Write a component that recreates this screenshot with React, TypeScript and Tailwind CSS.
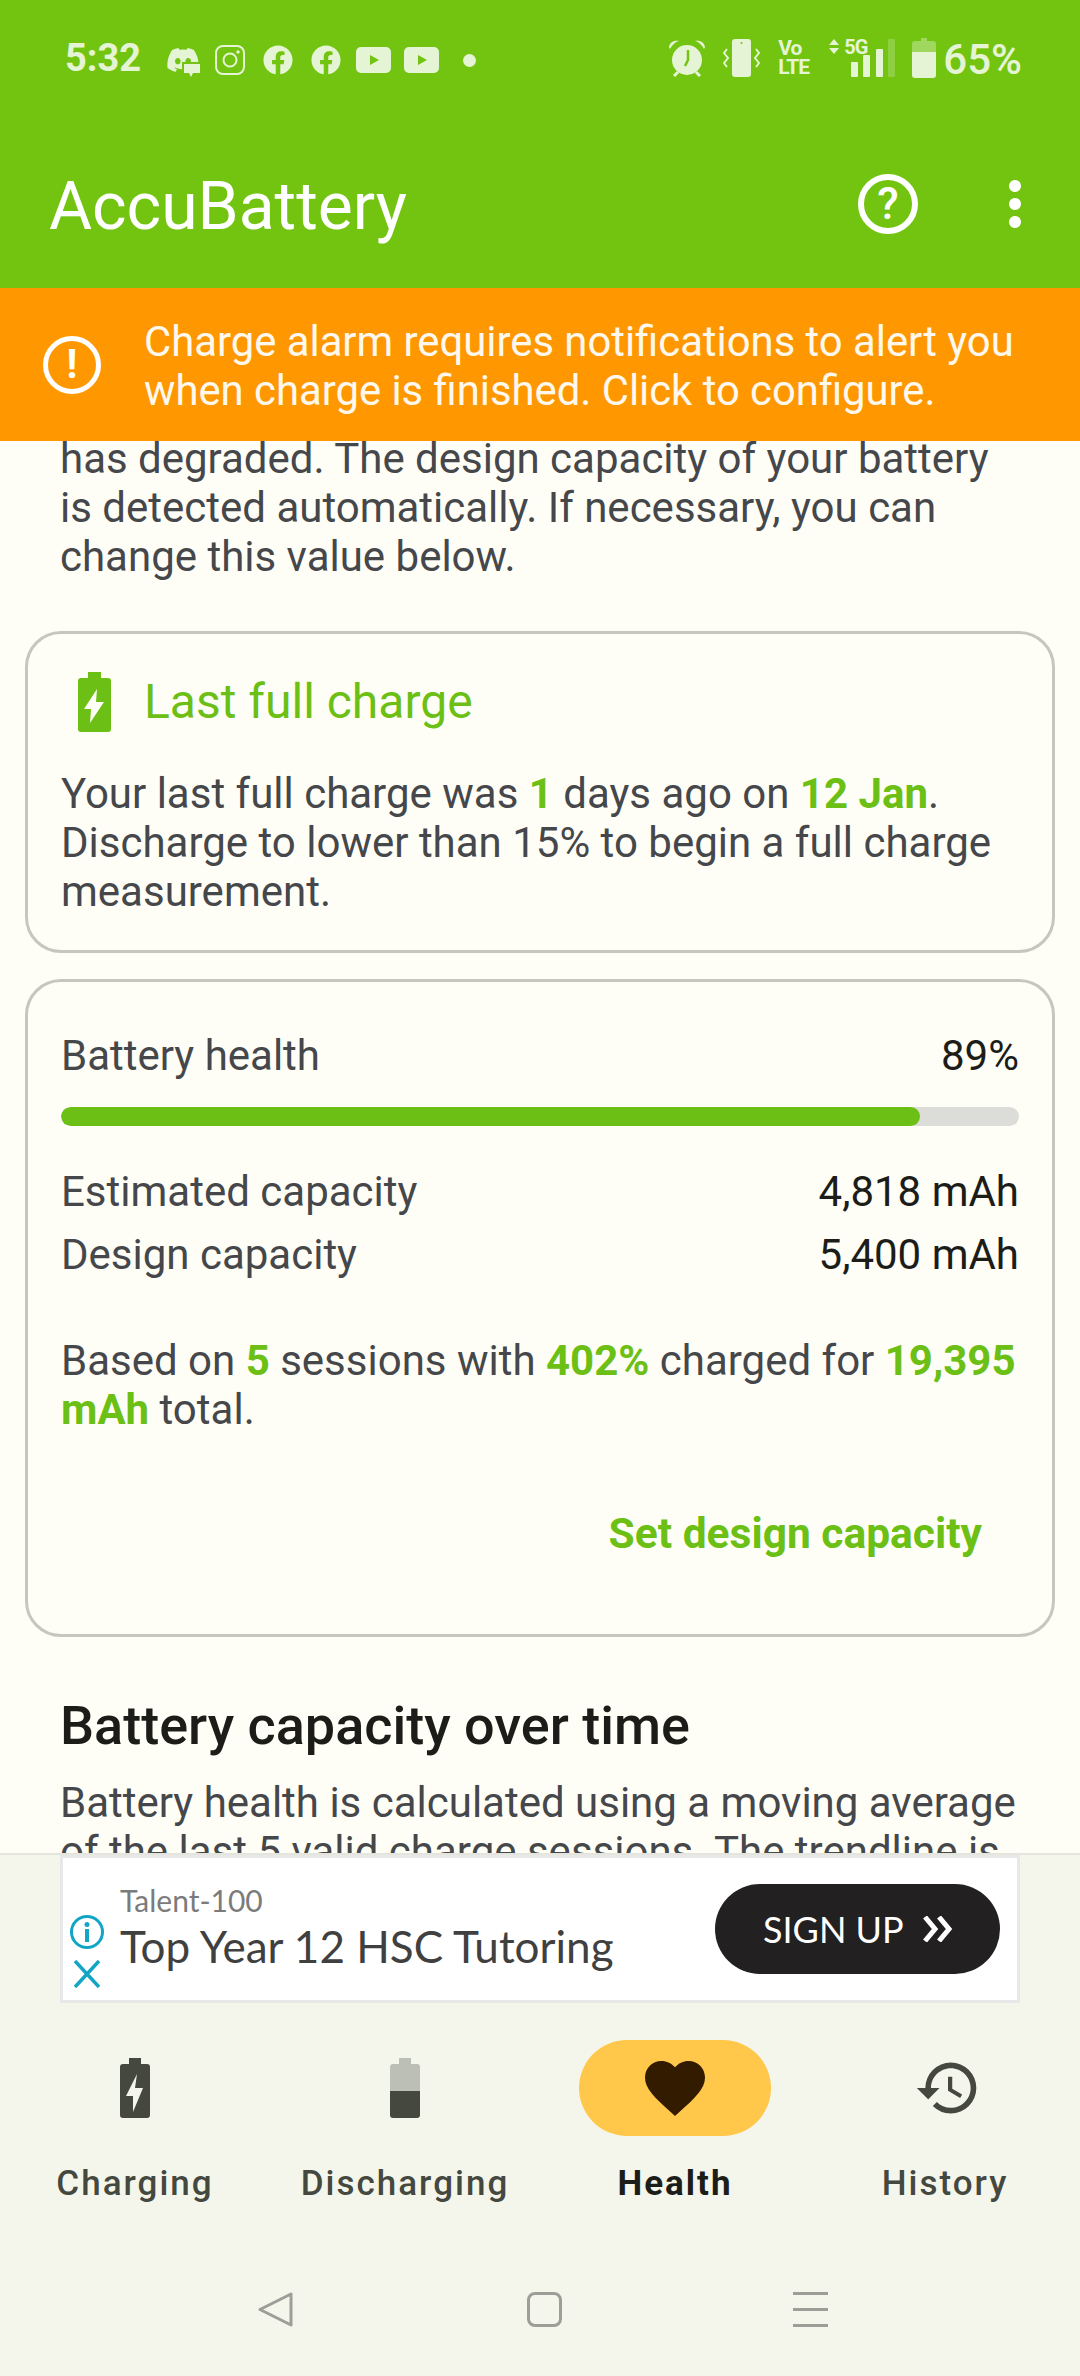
import { MdFavorite, MdHistory, MdMoreVert } from "react-icons/md";
import { FaDiscord, FaFacebook } from "react-icons/fa";

const ROBOTO = "font-['Roboto',sans-serif]";

function Green({ children }: { children: React.ReactNode }) {
  return <span className="font-bold text-[#6cbf14]">{children}</span>;
}

function YoutubeIcon() {
  return (
    <svg viewBox="0 0 35 26" className="h-[26px] w-[35px]">
      <path
        fillRule="evenodd"
        fill="currentColor"
        d="M5 0h25a5 5 0 0 1 5 5v16a5 5 0 0 1-5 5H5a5 5 0 0 1-5-5V5a5 5 0 0 1 5-5zM14 8v10l9-5z"
      />
    </svg>
  );
}

function NotificationIcons() {
  return (
    <div className="ml-[26px] mt-[4px] flex items-center text-[#e6f4d6]">
      <div className="relative h-[30px] w-[32px]">
        <FaDiscord size={34} className="-ml-[1px] -mt-[2px]" />
        <svg viewBox="0 0 18 16" className="absolute bottom-[-3px] right-[-1px] h-[16px] w-[18px]">
          <path fill="#72c410" d="M0 0h18v16H0z" />
          <path fill="currentColor" d="M2 2h16v9h-7l-2 4-2-4H2z" />
        </svg>
      </div>
      <svg viewBox="0 0 30 30" className="ml-[16px] h-[30px] w-[30px]">
        <rect x="1" y="1" width="28" height="28" rx="7" fill="none" stroke="currentColor" strokeWidth="2" />
        <circle cx="15" cy="15" r="6.500" fill="none" stroke="currentColor" strokeWidth="2" />
        <circle cx="23" cy="7" r="1.700" fill="currentColor" />
      </svg>
      <FaFacebook className="ml-[18px]" size={30} />
      <FaFacebook className="ml-[18px]" size={30} />
      <div className="ml-[15px]">
        <YoutubeIcon />
      </div>
      <div className="ml-[13px]">
        <YoutubeIcon />
      </div>
      <div className="ml-[24px] h-[13px] w-[13px] rounded-full bg-[#e6f4d6]" />
    </div>
  );
}

function SystemIcons() {
  return (
    <div className="ml-auto flex items-center text-[#e6f4d6]">
      <svg viewBox="0 0 38 38" className="h-[38px] w-[38px]">
        <circle cx="19" cy="21" r="15" fill="currentColor" />
        <path d="M20 11v10l-3 6" fill="none" stroke="#72c410" strokeWidth="2.500" />
        <path fill="currentColor" d="M1 8c1-5 5-7 10-6-4 1-7 4-9 8zM37 8c-1-5-5-7-10-6 4 1 7 4 9 8z" />
        <path fill="none" stroke="currentColor" strokeWidth="3" d="M10 33l-4 4M28 33l4 4" />
      </svg>
      <svg viewBox="0 0 37 38" className="ml-[17px] h-[38px] w-[37px]">
        <rect x="9" y="0" width="19" height="38" rx="3" fill="currentColor" />
        <circle cx="18.500" cy="4" r="1" fill="#72c410" />
        <path
          d="M4 10l-3 4 4 5-4 5 3 4M33 10l3 4-4 5 4 5-3 4"
          fill="none"
          stroke="currentColor"
          strokeWidth="2"
        />
      </svg>
      <div className={`ml-[18px] flex w-[33px] flex-col text-[21px] font-bold leading-[19px] tracking-[-1px] ${ROBOTO}`}>
        <span>Vo</span>
        <span>LTE</span>
      </div>
      <div className="relative ml-[18px] h-[38px] w-[66px]">
        <svg viewBox="0 0 66 38" className="h-[38px] w-[66px]">
          <path fill="currentColor" d="M5 0l5 6H0zM5 15L0 9h10z" />
          <rect x="22" y="23" width="7" height="15" rx="1" fill="currentColor" />
          <rect x="47" y="10" width="7" height="28" rx="1" fill="currentColor" />
          <rect x="34" y="16" width="7" height="22" rx="1" fill="currentColor" />
          <rect x="59" y="0" width="7" height="38" rx="1" fill="currentColor" fillOpacity="0.25" />
        </svg>
        <span className={`absolute left-[15px] top-[-2px] text-[20px] font-bold leading-[20px] tracking-[-1px] ${ROBOTO}`}>
          5G
        </span>
      </div>
      <svg viewBox="0 0 24 40" className="ml-[17px] h-[40px] w-[24px]">
        <path fill="currentColor" fillOpacity="0.4" d="M3 3h6V0h6v3h6a3 3 0 0 1 3 3v8H0V6a3 3 0 0 1 3-3z" />
        <path fill="currentColor" d="M0 14h24v23a3 3 0 0 1-3 3H3a3 3 0 0 1-3-3z" />
      </svg>
      <span className="ml-[7px] mt-[3px] text-[42px] font-medium leading-none">65%</span>
    </div>
  );
}

function Header() {
  return (
    <header className="flex h-[288px] flex-col bg-[#72c410] text-white">
      <div className="flex h-[116px] items-center pl-[65px] pr-[58px]">
        <span className="text-[38px] font-bold leading-none text-[#e6f4d6]">5:32</span>
        <NotificationIcons />
        <SystemIcons />
      </div>
      <div className="flex h-[172px] items-start pl-[49px] pr-[29px] pt-[56px]">
        <span className="text-[66px] leading-[70px]">AccuBattery</span>
        <div className="ml-auto mr-[61px] mt-[2px] flex h-[60px] w-[60px] items-center justify-center rounded-full border-[6px] border-white text-[44px] font-medium leading-none">
          ?
        </div>
        <MdMoreVert size={72} className="-mt-[4px]" />
      </div>
    </header>
  );
}

function AlarmBanner() {
  return (
    <div className="flex h-[153px] items-center bg-[#ff9800] pl-[43px] text-[41.8px] leading-[49px] text-[#fff8ee]">
      <div className="flex h-[58px] w-[58px] shrink-0 items-center justify-center rounded-full border-[5px] border-white text-[40px] font-bold text-white">
        !
      </div>
      <p className="ml-[43px] mt-[3px]">
        Charge alarm requires notifications to alert you
        <br />
        when charge is finished. Click to configure.
      </p>
    </div>
  );
}

function LastFullCharge() {
  return (
    <section className="mt-[50px] h-[322px] rounded-[36px] border-[3px] border-[#c5c7bd] px-[33px] pt-[38px]">
      <div className="flex h-[60px] items-center">
        <svg viewBox="0 0 33 60" className="ml-[17px] h-[60px] w-[33px] text-[#6cbf14]">
          <path
            fill="currentColor"
            fillRule="evenodd"
            d="M10 0h13v6h7a3 3 0 0 1 3 3v48a3 3 0 0 1-3 3H3a3 3 0 0 1-3-3V9a3 3 0 0 1 3-3h7zM19 17l-13 20h7l-1 14 14-21h-8z"
          />
        </svg>
        <h2 className="ml-[33px] text-[48px] leading-none text-[#6cbf14]">Last full charge</h2>
      </div>
      <p className="mt-[37px]">
        Your last full charge was <Green>1</Green> days ago on <Green>12 Jan</Green>.
        <br />
        Discharge to lower than 15% to begin a full charge
        <br />
        measurement.
      </p>
    </section>
  );
}

function BatteryHealth() {
  return (
    <section className="mt-[26px] h-[658px] rounded-[36px] border-[3px] border-[#c5c7bd] px-[33px] pt-[49px]">
      <div className="flex justify-between">
        <span>Battery health</span>
        <span className="text-[#1c1d19]">89%</span>
      </div>
      <div className="mt-[27px] h-[19px] overflow-hidden rounded-full bg-[#dcdcd8]">
        <div className="h-full w-[89.700%] rounded-full bg-[#6cbf14]" />
      </div>
      <div className="mt-[41px] flex h-[63px] justify-between">
        <span>Estimated capacity</span>
        <span className="text-[#1c1d19]">4,818 mAh</span>
      </div>
      <div className="flex h-[63px] justify-between">
        <span>Design capacity</span>
        <span className="text-[#1c1d19]">5,400 mAh</span>
      </div>
      <p className="mt-[43px]">
        Based on <Green>5</Green> sessions with <Green>402%</Green> charged for <Green>19,395</Green>
        <br />
        <Green>mAh</Green> total.
      </p>
      <div className="mt-[75px] pr-[37px] text-right text-[42.5px] font-bold text-[#6cbf14]">Set design capacity</div>
    </section>
  );
}

function AdBanner() {
  return (
    <div className="flex h-[148px] items-stretch border-[3px] border-[#e8e8e8] bg-white">
      <div className="flex w-[48px] flex-col items-center pt-[56px] text-[#12a5c6]">
        <svg viewBox="0 0 36 36" className="h-[36px] w-[36px]">
          <circle cx="18" cy="18" r="15.500" fill="none" stroke="currentColor" strokeWidth="3" />
          <rect x="16" y="15" width="4" height="13" fill="currentColor" />
          <circle cx="18" cy="10.500" r="2.500" fill="currentColor" />
        </svg>
        <svg viewBox="0 0 30 28" className="mt-[10px] h-[28px] w-[30px]">
          <path d="M3 1l24 26M27 1L3 27" fill="none" stroke="currentColor" strokeWidth="3.500" />
        </svg>
      </div>
      <div className="ml-[9px] flex flex-col pt-[24px] font-['Lato',sans-serif]">
        <span className="text-[30px] leading-[36px] text-[#7b7b7b]">Talent-100</span>
        <span className="mt-[2px] text-[44px] leading-[52px] text-[#404040]">Top Year 12 HSC Tutoring</span>
      </div>
      <div className="ml-auto mr-[17px] mt-[26px] flex h-[90px] w-[285px] items-center rounded-full bg-[#222021] pl-[48px] font-['Lato',sans-serif] text-[36px] text-white">
        SIGN UP
        <svg viewBox="0 0 32 26" className="ml-[18px] h-[26px] w-[32px]">
          <path d="M3 1l10 12L3 25M17 1l10 12-10 12" fill="none" stroke="currentColor" strokeWidth="5" />
        </svg>
      </div>
    </div>
  );
}

function TabIcon({ name }: { name: string }) {
  if (name === "Charging") {
    return (
      <svg viewBox="0 0 30 60" className="h-[60px] w-[30px] text-[#45483f]">
        <path
          fill="currentColor"
          fillRule="evenodd"
          d="M9 0h12v6h6a3 3 0 0 1 3 3v48a3 3 0 0 1-3 3H3a3 3 0 0 1-3-3V9a3 3 0 0 1 3-3h6zM17 16L6 38h7v16l10-24h-8z"
        />
      </svg>
    );
  }
  if (name === "Discharging") {
    return (
      <svg viewBox="0 0 30 60" className="h-[60px] w-[30px]">
        <path fill="#bcbfb5" d="M9 0h12v6h6a3 3 0 0 1 3 3v24H0V9a3 3 0 0 1 3-3h6z" />
        <path fill="#45483f" d="M0 33h30v24a3 3 0 0 1-3 3H3a3 3 0 0 1-3-3z" />
      </svg>
    );
  }
  if (name === "Health") {
    return <MdFavorite size={72} className="text-[#331b00]" />;
  }
  return <MdHistory size={68} className="ml-[5px] text-[#45483f]" />;
}

function BottomTabs() {
  const tabs = ["Charging", "Discharging", "Health", "History"];
  return (
    <nav className="mt-[37px] grid h-[164px] grid-cols-4">
      {tabs.map((tab) => (
        <div key={tab} className="flex flex-col items-center">
          <div
            className={
              tab === "Health"
                ? "flex h-[96px] w-[192px] items-center justify-center rounded-full bg-[#ffc84a]"
                : "flex h-[96px] w-[192px] items-center justify-center"
            }
          >
            <TabIcon name={tab} />
          </div>
          <span
            className={
              tab === "Health"
                ? "mt-[27px] text-[35px] font-bold leading-[42px] tracking-[2px] text-[#1c1d19]"
                : "mt-[27px] text-[35px] font-medium leading-[42px] tracking-[2px] text-[#45483f]"
            }
          >
            {tab}
          </span>
        </div>
      ))}
    </nav>
  );
}

function SystemNav() {
  return (
    <div className="mt-[88px] grid h-[35px] grid-cols-3 pl-[142px] pr-[138px] text-[#9d9e98]">
      <svg viewBox="0 0 35 35" className="h-[35px] w-[35px] justify-self-center">
        <path
          d="M33 2v31L2 17.500z"
          fill="none"
          stroke="currentColor"
          strokeWidth="3"
          strokeLinejoin="round"
        />
      </svg>
      <div className="ml-[6px] h-[35px] w-[35px] justify-self-center rounded-[8px] border-[3px] border-[#9d9e98]" />
      <div className="ml-[3px] flex h-[35px] w-[35px] flex-col justify-between justify-self-center">
        <div className="h-[3px] bg-[#9d9e98]" />
        <div className="h-[3px] bg-[#9d9e98]" />
        <div className="h-[3px] bg-[#9d9e98]" />
      </div>
    </div>
  );
}

export default function App() {
  return (
    <div className={`flex h-[2376px] w-[1080px] flex-col overflow-hidden bg-[#f4f6ec] ${ROBOTO}`}>
      <Header />
      <AlarmBanner />
      <main className="h-[1414px] shrink-0 overflow-hidden border-b-[2px] border-[#e4e5dd] bg-[#fefef6] px-[25px] text-[42px] leading-[49px] text-[#45474b]">
        <p className="-mt-[7px] pl-[35px]">
          has degraded. The design capacity of your battery
          <br />
          is detected automatically. If necessary, you can
          <br />
          change this value below.
        </p>
        <LastFullCharge />
        <BatteryHealth />
        <h2 className="mt-[61px] pl-[35px] text-[54px] font-medium leading-[56px] text-[#1c1d19]">
          Battery capacity over time
        </h2>
        <p className="mt-[24px] pl-[35px]">
          Battery health is calculated using a moving average
          <br />
          of the last 5 valid charge sessions. The trendline is
        </p>
      </main>
      <div className="shrink-0 px-[60px]">
        <AdBanner />
      </div>
      <BottomTabs />
      <SystemNav />
    </div>
  );
}
